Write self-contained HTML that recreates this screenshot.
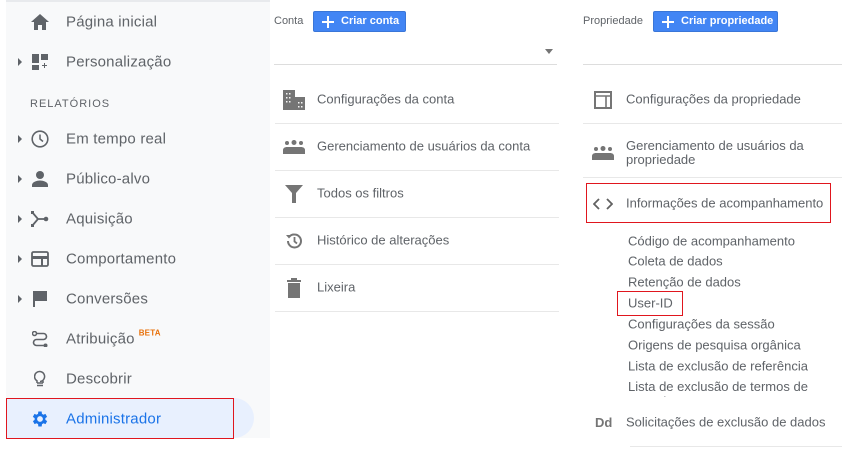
<!DOCTYPE html>
<html><head><meta charset="utf-8"><style>
*{margin:0;padding:0;box-sizing:border-box}
body{width:842px;height:449px;background:#fff;position:relative;overflow:hidden;font-family:"Liberation Sans",Arial,sans-serif;color:#5f6368}
.a{position:absolute;white-space:nowrap}
.side{position:absolute;left:6px;top:0;width:264px;height:438px;background:#f8f9fa;border-top:2px solid #e8eaed}
.si{position:absolute;left:66px;font-size:15px;color:#5f6368;letter-spacing:.2px;transform:translateY(-50%)}
.ic{position:absolute;transform:translate(-50%,-50%)}
.tri{position:absolute;left:18px;width:0;height:0;border-left:4px solid #5f6368;border-top:4px solid transparent;border-bottom:4px solid transparent;transform:translateY(-50%)}
.mi{position:absolute;font-size:13px;color:#5f6368;transform:translateY(-50%)}
.sep{position:absolute;height:1px;background:#e8e8e8}
.btn{position:absolute;background:#4285f4;border:1px solid #3a76d8;border-radius:2px;color:#fff;font-size:11px;font-weight:bold;height:21px;line-height:19px;padding-left:27px}
.btn:before{content:"";position:absolute;left:8px;width:12px;height:2px;background:#fff;top:9px}
.btn:after{content:"";position:absolute;left:13px;top:4px;width:2px;height:12px;background:#fff}
.sub{position:absolute;left:628px;font-size:13px;color:#5f6368;transform:translateY(-50%)}
</style></head><body>
<div class="side"></div>
<div class="a" style="left:6px;top:398px;width:248px;height:40px;background:#e8f0fe;border-radius:0 20px 20px 0"></div>
<div class="a" style="left:6px;top:398px;width:228px;height:41px;border:1px solid #e0161e"></div>

<svg class="ic" style="left:40px;top:22px" width="18" height="16" viewBox="0 0 18 16"><path d="M9 0L0 8h3v8h4v-5h4v5h4V8h3z" fill="#5f6368"/></svg>
<div class="tri" style="top:62px"></div>
<svg class="ic" style="left:40px;top:62px" width="16" height="16" viewBox="0 0 16 16" fill="#5f6368"><rect x="0" y="0" width="7" height="9"/><rect x="9" y="0" width="7" height="6"/><rect x="0" y="11" width="7" height="5"/><path d="M12 9h1v2h2v1h-2v2h-1v-2h-2v-1h2z"/></svg>
<div class="a" style="left:30px;top:98px;font-size:11px;letter-spacing:1px;color:#5f6368">RELATÓRIOS</div>
<div class="tri" style="top:139px"></div>
<svg class="ic" style="left:40px;top:139px" width="18" height="18" viewBox="0 0 18 18"><circle cx="9" cy="9" r="7.8" fill="none" stroke="#5f6368" stroke-width="1.6"/><path d="M9 4.5V9l3 2.5" fill="none" stroke="#5f6368" stroke-width="1.5"/></svg>
<div class="tri" style="top:179px"></div>
<svg class="ic" style="left:40px;top:179px" width="16" height="16" viewBox="0 0 16 16" fill="#5f6368"><circle cx="8" cy="4" r="4"/><path d="M0 16v-2c0-3 5-4.5 8-4.5s8 1.5 8 4.5v2z"/></svg>
<div class="tri" style="top:219px"></div>
<svg class="ic" style="left:40px;top:219px" width="18" height="16" viewBox="0 0 18 16"><path d="M1 1l6 7-6 7M7 8h8" fill="none" stroke="#5f6368" stroke-width="1.8"/><circle cx="15" cy="8" r="2.3" fill="#5f6368"/><rect x="0" y="0" width="3" height="3" fill="#5f6368"/><rect x="0" y="13" width="3" height="3" fill="#5f6368"/></svg>
<div class="tri" style="top:259px"></div>
<svg class="ic" style="left:40px;top:259px" width="18" height="16" viewBox="0 0 18 16"><rect x="1" y="1" width="16" height="14" rx="1.5" fill="none" stroke="#5f6368" stroke-width="1.8"/><rect x="1" y="5" width="16" height="3" fill="#5f6368"/><rect x="10" y="5" width="2" height="10" fill="#5f6368"/></svg>
<div class="tri" style="top:299px"></div>
<svg class="ic" style="left:40px;top:299px" width="14" height="16" viewBox="0 0 14 16" fill="#5f6368"><rect x="0" y="0" width="2" height="16"/><path d="M2 0h12v10H2z"/></svg>
<svg class="ic" style="left:40px;top:339px" width="16" height="16" viewBox="0 0 16 16"><circle cx="2.5" cy="2.5" r="2" fill="none" stroke="#5f6368" stroke-width="1.5"/><path d="M4.5 2.5h7a3 3 0 010 6h-7a3 3 0 000 6h7" fill="none" stroke="#5f6368" stroke-width="1.6"/><circle cx="13.5" cy="14.5" r="2" fill="#5f6368"/></svg>
<svg class="ic" style="left:40px;top:379px" width="12" height="18" viewBox="0 0 12 18"><path d="M3 13v-2.2A5 5 0 116 11.5 M9 13v-2.2" fill="none" stroke="#5f6368" stroke-width="1.5"/><path d="M3 15.5h6M3 13h6" stroke="#5f6368" stroke-width="1.5"/></svg>
<svg class="ic" style="left:40px;top:419px" width="20" height="20" viewBox="0 0 24 24"><path fill="#1a73e8" d="M19.4 13a7.5 7.5 0 000-2l2.1-1.6-2-3.5-2.5 1a7.6 7.6 0 00-1.7-1L15 3h-4l-.4 2.9a7.6 7.6 0 00-1.7 1l-2.5-1-2 3.5L6.6 11a7.5 7.5 0 000 2l-2.1 1.6 2 3.5 2.5-1a7.6 7.6 0 001.7 1L11 21h4l.4-2.9a7.6 7.6 0 001.7-1l2.5 1 2-3.5zM13 15.5a3.5 3.5 0 110-7 3.5 3.5 0 010 7z" transform="translate(-1 0)"/></svg>

<div class="si" style="top:22px">Página inicial</div>
<div class="si" style="top:62px">Personalização</div>
<div class="si" style="top:139px">Em tempo real</div>
<div class="si" style="top:179px">Público-alvo</div>
<div class="si" style="top:219px">Aquisição</div>
<div class="si" style="top:259px">Comportamento</div>
<div class="si" style="top:299px">Conversões</div>
<div class="si" style="top:339px">Atribuição<sup style="color:#e8710a;font-size:8px;font-weight:bold;margin-left:4px;position:relative;top:-2px">BETA</sup></div>
<div class="si" style="top:379px">Descobrir</div>
<div class="si" style="top:419px;color:#1a73e8">Administrador</div>

<div class="a" style="left:274px;top:15px;font-size:11px">Conta</div>
<div class="btn" style="left:313px;top:11px;width:93px">Criar conta</div>
<div class="a" style="left:545px;top:49px;border-top:5px solid #757575;border-left:4px solid transparent;border-right:4px solid transparent"></div>
<div class="sep" style="left:274px;top:64px;width:283px;background:#ddd"></div>
<svg class="ic" style="left:294px;top:100px" width="22" height="20" viewBox="0 0 22 20" fill="#757575"><rect x="0" y="0" width="12" height="20"/><rect x="12" y="7" width="10" height="13"/><g fill="#f5f5f5"><rect x="3" y="3" width="1.5" height="1.5"/><rect x="6" y="3" width="1.5" height="1.5"/><rect x="3" y="7" width="1.5" height="1.5"/><rect x="6" y="7" width="1.5" height="1.5"/><rect x="3" y="11" width="1.5" height="1.5"/><rect x="6" y="11" width="1.5" height="1.5"/><rect x="15" y="12" width="1.5" height="1.5"/><rect x="18" y="12" width="1.5" height="1.5"/><rect x="15" y="16" width="1.5" height="1.5"/><rect x="18" y="16" width="1.5" height="1.5"/></g></svg>
<svg class="ic" style="left:294px;top:147px" width="22" height="14" viewBox="0 0 22 14" fill="#757575"><circle cx="4" cy="3" r="2"/><circle cx="11" cy="2.5" r="2.5"/><circle cx="18" cy="3" r="2"/><path d="M0 14v-4c0-2 2-3 4-3h14c2 0 4 1 4 3v4z"/></svg>
<svg class="ic" style="left:294px;top:194px" width="18" height="18" viewBox="0 0 18 18" fill="#757575"><path d="M0 0h18l-7 8v10H7V8z"/></svg>
<svg class="ic" style="left:294px;top:241px" width="18" height="18" viewBox="0 0 18 18"><path d="M3 9a6.5 6.5 0 106.5-6.5A6.5 6.5 0 004 5" fill="none" stroke="#757575" stroke-width="2"/><path d="M1 3l3 3.5L7 3z" fill="#757575"/><path d="M9.5 5v4.5l2.5 2" fill="none" stroke="#757575" stroke-width="1.8"/></svg>
<svg class="ic" style="left:294px;top:288px" width="14" height="20" viewBox="0 0 14 20" fill="#757575"><rect x="0" y="2" width="14" height="2"/><rect x="4" y="0" width="6" height="2"/><rect x="1" y="5" width="12" height="15"/></svg>
<div class="mi" style="left:317px;top:99px">Configurações da conta</div>
<div class="mi" style="left:317px;top:146px">Gerenciamento de usuários da conta</div>
<div class="mi" style="left:317px;top:193px">Todos os filtros</div>
<div class="mi" style="left:317px;top:240px">Histórico de alterações</div>
<div class="mi" style="left:317px;top:287px">Lixeira</div>
<div class="sep" style="left:275px;top:123px;width:284px"></div>
<div class="sep" style="left:275px;top:170px;width:284px"></div>
<div class="sep" style="left:275px;top:217px;width:284px"></div>
<div class="sep" style="left:275px;top:264px;width:284px"></div>
<div class="sep" style="left:275px;top:311px;width:284px"></div>

<div class="a" style="left:583px;top:15px;font-size:11px">Propriedade</div>
<div class="btn" style="left:653px;top:11px;width:125px">Criar propriedade</div>
<div class="sep" style="left:583px;top:64px;width:259px;background:#ddd"></div>
<svg class="ic" style="left:603px;top:100px" width="18" height="18" viewBox="0 0 18 18"><rect x="1" y="1" width="16" height="16" fill="none" stroke="#757575" stroke-width="2"/><path d="M1 5h16M12 5v12" stroke="#757575" stroke-width="1.6"/></svg>
<svg class="ic" style="left:603px;top:153px" width="22" height="14" viewBox="0 0 22 14" fill="#757575"><circle cx="4" cy="3" r="2"/><circle cx="11" cy="2.5" r="2.5"/><circle cx="18" cy="3" r="2"/><path d="M0 14v-4c0-2 2-3 4-3h14c2 0 4 1 4 3v4z"/></svg>
<svg class="ic" style="left:603px;top:204px" width="20" height="12" viewBox="0 0 20 12"><path d="M6 1L1 6l5 5M14 1l5 5-5 5" fill="none" stroke="#616161" stroke-width="1.8"/></svg>
<div class="mi" style="left:626px;top:99px">Configurações da propriedade</div>
<div class="mi" style="left:626px;top:153px;line-height:14px">Gerenciamento de usuários da<br>propriedade</div>
<div class="mi" style="left:626px;top:203px">Informações de acompanhamento</div>
<div class="sep" style="left:583px;top:123px;width:259px"></div>
<div class="sep" style="left:583px;top:177px;width:259px"></div>
<div class="a" style="left:586px;top:183px;width:245px;height:40px;border:1px solid #e0161e"></div>
<div class="sub" style="top:241px">Código de acompanhamento</div>
<div class="sub" style="top:261px">Coleta de dados</div>
<div class="sub" style="top:282px">Retenção de dados</div>
<div class="sub" style="top:303px">User-ID</div>
<div class="a" style="left:617px;top:291px;width:66px;height:25px;border:1px solid #e0161e"></div>
<div class="sub" style="top:324px">Configurações da sessão</div>
<div class="sub" style="top:345px">Origens de pesquisa orgânica</div>
<div class="sub" style="top:366px">Lista de exclusão de referência</div>
<div class="a" style="left:628px;top:379px;height:18px;overflow:hidden;font-size:13px;line-height:15px">Lista de exclusão de termos de<br>pesquisa</div>
<div class="a" style="left:595px;top:415px;font-size:13px;font-weight:bold;color:#757575">Dd</div>
<div class="mi" style="left:626px;top:422px">Solicitações de exclusão de dados</div>
<div class="sep" style="left:630px;top:446px;width:212px"></div>
</body></html>
